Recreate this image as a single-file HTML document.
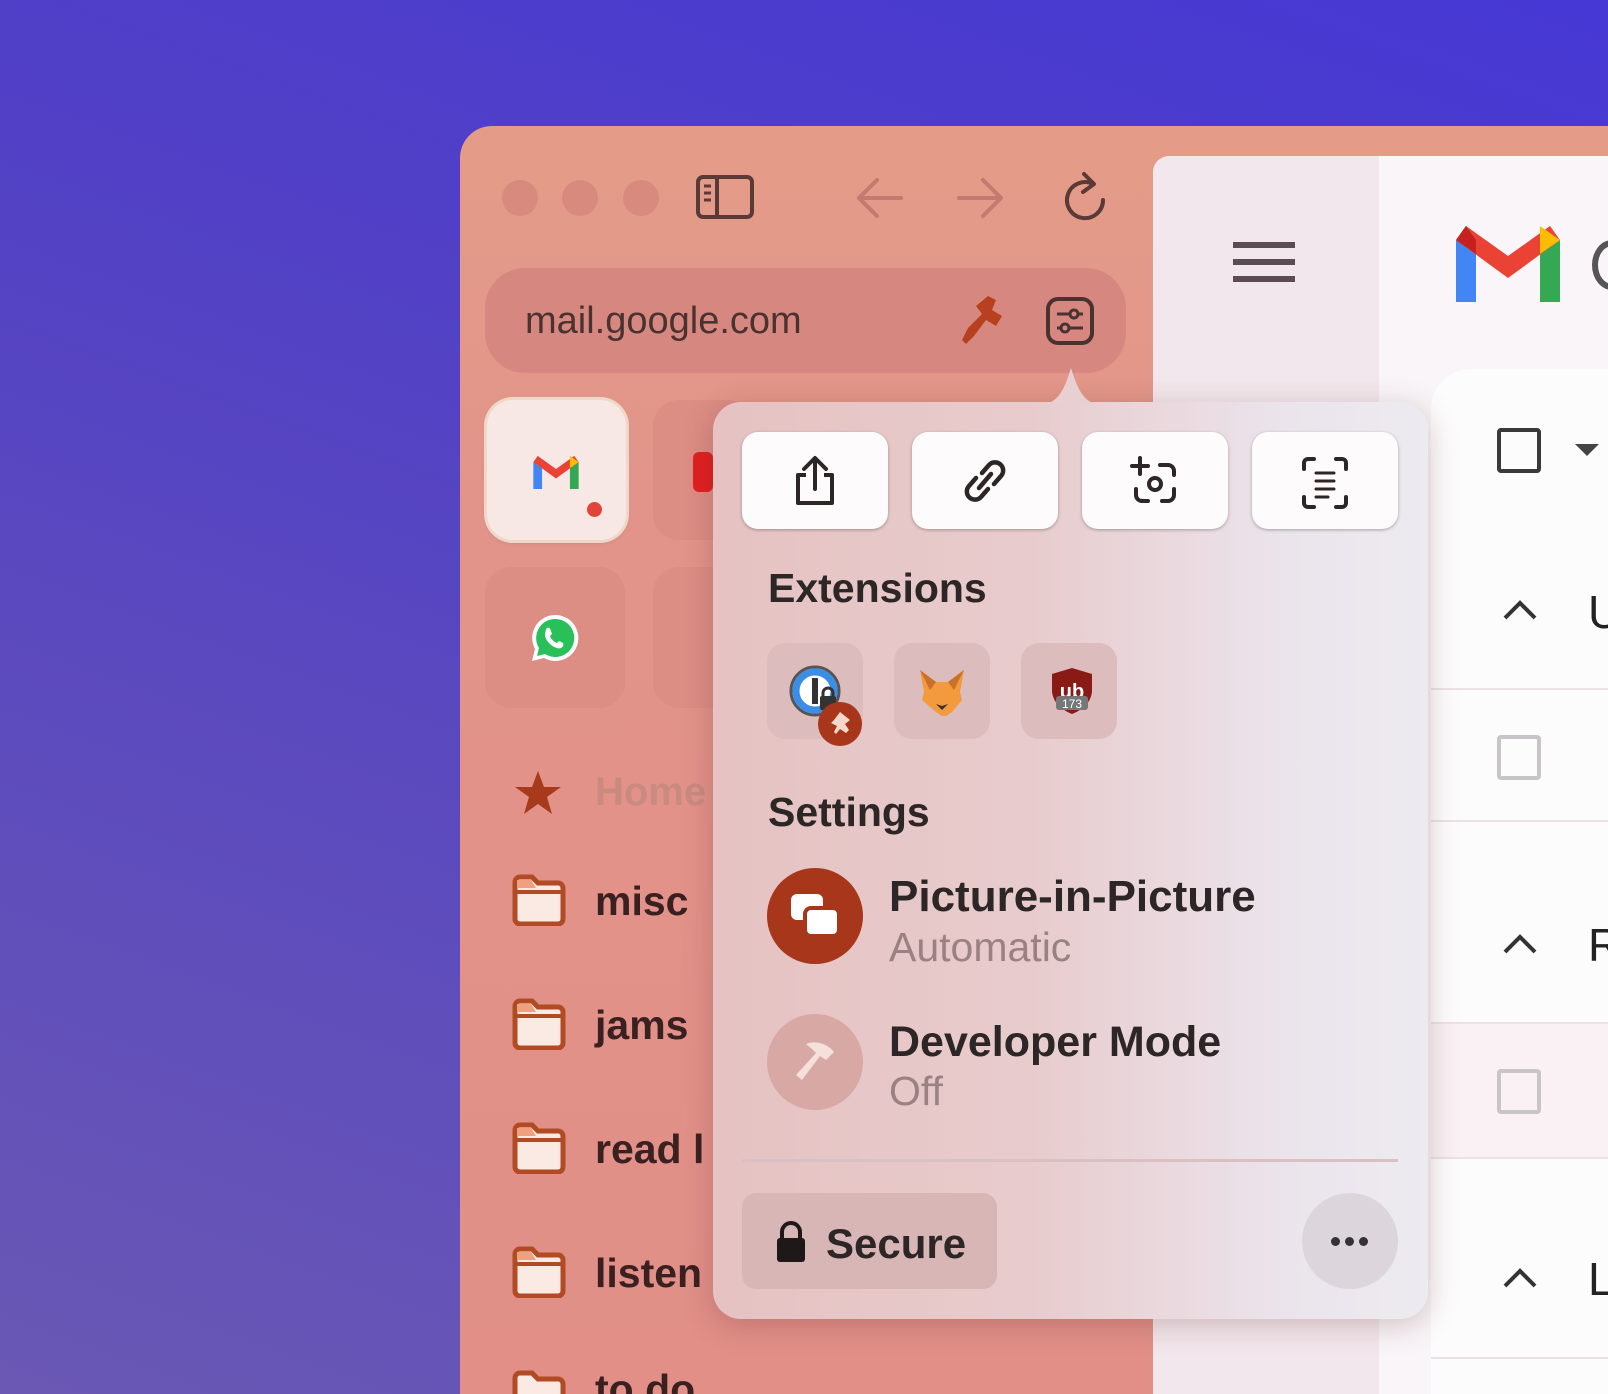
<!DOCTYPE html>
<html style="width:1608px;height:1394px;overflow:hidden;background:#5040c8"><head><meta charset="utf-8"><style>
*{margin:0;padding:0;box-sizing:border-box}
body{width:1608px;height:1394px;overflow:hidden;position:relative;font-family:"Liberation Sans",sans-serif;
background:linear-gradient(200deg,#4638d4 0%,#5342c4 40%,#6a58b4 100%)}
.a{position:absolute}
.win{left:460px;top:126px;width:1148px;height:1268px;border-top-left-radius:32px;background:linear-gradient(180deg,#e49c88 0%,#e2948a 30%,#e18f87 100%)}
.tl{width:36px;height:36px;border-radius:50%;background:#d98a7e;top:180px}
.gm{left:1153px;top:156px;width:455px;height:1238px;background:#f2e7ec;border-top-left-radius:16px}
.gm2{left:1379px;top:156px;width:229px;height:1238px;background:#f9f5f8}
.card{left:1431px;top:369px;width:177px;height:1025px;background:#fdfcfd;border-top-left-radius:40px}
.pop{left:713px;top:402px;width:715px;height:917px;border-radius:28px;background:linear-gradient(90deg,#e6c2c2 0%,#e8cccd 45%,#ebe4ec 80%,#ecebf0 100%);box-shadow:0 6px 30px rgba(90,40,40,.25)}
.btn{top:432px;width:146px;height:97px;background:#fdfbfb;border-radius:16px;box-shadow:0 1px 3px rgba(0,0,0,.3)}
.btn svg{position:absolute;left:48px;top:23px}
.h{font-weight:bold;font-size:41px;color:#2d2626}
.ext{top:643px;width:96px;height:96px;border-radius:18px;background:#dcbcbc}
.t{font-weight:bold;color:#2d2626}
.s{font-size:41px;color:#9a8282}
.fold{font-size:41px;font-weight:bold;color:#3a2020;left:595px}
.chk{width:44px;height:45px;border:4px solid #c8c4c8;border-radius:4px}
.sep{height:2px;background:#ece2e6;left:1431px;width:177px}
</style></head><body>
<div class="a win"></div>
<div class="a tl" style="left:502px"></div>
<div class="a tl" style="left:562px"></div>
<div class="a tl" style="left:623px"></div>
<svg class="a" style="left:695px;top:174px" width="60" height="46" viewBox="0 0 60 46"><rect x="3" y="3" width="54" height="40" rx="5" fill="none" stroke="#5a3a36" stroke-width="4"/><line x1="22" y1="3" x2="22" y2="43" stroke="#5a3a36" stroke-width="4"/><path d="M9 12h7M9 19h7M9 26h7" stroke="#5a3a36" stroke-width="3"/></svg>
<svg class="a" style="left:853px;top:176px" width="52" height="44"><path d="M48 22H6M24 4L6 22l18 18" fill="none" stroke="#c47a70" stroke-width="4" stroke-linecap="round" stroke-linejoin="round"/></svg>
<svg class="a" style="left:955px;top:176px" width="52" height="44"><path d="M4 22h42M28 4l18 18-18 18" fill="none" stroke="#c47a70" stroke-width="4" stroke-linecap="round" stroke-linejoin="round"/></svg>
<svg class="a" style="left:1060px;top:168px" width="50" height="58"><path d="M33 16A18 18 0 1 0 43 32" fill="none" stroke="#5a3a36" stroke-width="4" stroke-linecap="round"/><path d="M24 6l10 10-11 8" fill="none" stroke="#5a3a36" stroke-width="4" stroke-linecap="round" stroke-linejoin="round"/></svg>
<div class="a" style="left:485px;top:268px;width:641px;height:105px;border-radius:40px;background:#d68880"></div>
<div class="a" style="left:525px;top:300px;font-size:38px;color:#4a3230">mail.google.com</div>
<svg class="a" style="left:958px;top:292px" width="50" height="56" viewBox="0 0 50 56"><path d="M30 4l8 4-4 10 10 6-6 10-10-6-12 16-8 8-4-4 6-12 14-14-6-8z" fill="#b7401e"/></svg>
<svg class="a" style="left:1045px;top:296px" width="50" height="50"><rect x="3" y="3" width="44" height="44" rx="10" fill="none" stroke="#4a3230" stroke-width="4"/><path d="M12 18h26M12 32h26" stroke="#4a3230" stroke-width="3"/><circle cx="29" cy="18" r="4" fill="#d68880" stroke="#4a3230" stroke-width="3"/><circle cx="20" cy="32" r="4" fill="#d68880" stroke="#4a3230" stroke-width="3"/></svg>
<div class="a gm"></div><div class="a gm2"></div>
<div class="a" style="left:1233px;top:242px;width:62px;height:6px;background:#5a4c50;box-shadow:0 17px 0 #5a4c50,0 34px 0 #5a4c50"></div>
<svg class="a" style="left:1456px;top:224px" width="104" height="78" viewBox="0 0 104 78"><path d="M0 16v62h20V30z" fill="#4285f4"/><path d="M84 30v48h20V16z" fill="#34a853"/><path d="M0 16l52 38 52-38-10-14-42 30L10 2z" fill="#ea4335"/><path d="M84 2l20 14v0L84 30z" fill="#fbbc04"/><path d="M0 16L10 2l10 14v14z" fill="#c5221f"/></svg>
<div class="a" style="left:1592px;top:240px;width:40px;height:50px;border:6px solid #555;border-radius:50%"></div>
<div class="a card"></div>
<div class="a chk" style="left:1497px;top:428px;border-color:#3a3a3a"></div>
<svg class="a" style="left:1575px;top:444px" width="24" height="14"><path d="M0 0h24L12 12z" fill="#444"/></svg>
<svg class="a" style="left:1502px;top:598px" width="36" height="24"><path d="M3 20L18 5l15 15" fill="none" stroke="#333" stroke-width="4"/></svg>
<svg class="a" style="left:1502px;top:932px" width="36" height="24"><path d="M3 20L18 5l15 15" fill="none" stroke="#333" stroke-width="4"/></svg>
<svg class="a" style="left:1502px;top:1266px" width="36" height="24"><path d="M3 20L18 5l15 15" fill="none" stroke="#333" stroke-width="4"/></svg>
<div class="a" style="left:1588px;top:585px;font-size:46px;color:#222">U</div>
<div class="a" style="left:1588px;top:918px;font-size:46px;color:#222">R</div>
<div class="a" style="left:1588px;top:1252px;font-size:46px;color:#222">L</div>
<div class="a sep" style="top:688px"></div><div class="a sep" style="top:820px"></div>
<div class="a" style="left:1431px;top:1022px;width:177px;height:135px;background:#f9f1f4"></div>
<div class="a sep" style="top:1022px"></div><div class="a sep" style="top:1157px"></div><div class="a sep" style="top:1357px"></div>
<div class="a chk" style="left:1497px;top:735px"></div>
<div class="a chk" style="left:1497px;top:1069px"></div>
<!-- sidebar -->
<div class="a" style="left:487px;top:400px;width:139px;height:140px;border-radius:26px;background:#f7e8e6;box-shadow:0 0 0 3px #f0d8c8,0 2px 6px rgba(0,0,0,.15)"></div>
<svg class="a" style="left:533px;top:455px" width="46" height="34" viewBox="0 0 104 78"><path d="M0 16v62h20V30z" fill="#4285f4"/><path d="M84 30v48h20V16z" fill="#34a853"/><path d="M0 16l52 38 52-38-10-14-42 30L10 2z" fill="#ea4335"/><path d="M84 2l20 14L84 30z" fill="#fbbc04"/></svg>
<div class="a" style="left:587px;top:502px;width:15px;height:15px;border-radius:50%;background:#e0453a"></div>
<div class="a" style="left:653px;top:400px;width:100px;height:140px;border-radius:26px;background:#dc8d84"></div>
<div class="a" style="left:693px;top:452px;width:20px;height:40px;border-radius:6px;background:#e02020"></div>
<div class="a" style="left:485px;top:567px;width:140px;height:141px;border-radius:26px;background:#dc8d84"></div>
<div class="a" style="left:653px;top:567px;width:100px;height:141px;border-radius:26px;background:#dc8d84"></div>
<svg class="a" style="left:529px;top:612px" width="52" height="52" viewBox="0 0 52 52"><path d="M26 3a23 23 0 0 0-20 34L3 49l12-3A23 23 0 1 0 26 3z" fill="#fff"/><path d="M26 7a19 19 0 0 0-16 29l-2 8 8-2A19 19 0 1 0 26 7z" fill="#29c05a"/><path d="M18 16c2-1 3 0 4 3l1 3-2 2c1 3 4 6 7 7l2-2 4 2c1 2 0 4-2 5-4 2-14-4-16-12 0-4 1-7 2-8z" fill="#fff"/></svg>
<svg class="a" style="left:514px;top:770px" width="48" height="46" viewBox="0 0 48 46"><path d="M24 1l6 16h17l-14 10 5 17-14-10-14 10 5-17L1 17h17z" fill="#a83a1c"/></svg>
<div class="a" style="left:595px;top:770px;font-size:40px;font-weight:bold;color:#c98a80">Home</div>
<div class="a fold" style="top:878px">misc</div>
<div class="a fold" style="top:1002px">jams</div>
<div class="a fold" style="top:1126px">read l</div>
<div class="a fold" style="top:1250px">listen</div>
<div class="a fold" style="top:1366px">to do</div>
<svg class="a" style="left:512px;top:874px" width="54" height="52"><path d="M3 8a5 5 0 0 1 5-5h12l6 6h20a5 5 0 0 1 5 5v31a5 5 0 0 1-5 5H8a5 5 0 0 1-5-5z" fill="#fbe9e4" stroke="#b24a24" stroke-width="5"/><path d="M3 18h48" stroke="#b24a24" stroke-width="4"/><path d="M5 6h14l5 8H5z" fill="#f0a07e"/></svg>
<svg class="a" style="left:512px;top:998px" width="54" height="52"><path d="M3 8a5 5 0 0 1 5-5h12l6 6h20a5 5 0 0 1 5 5v31a5 5 0 0 1-5 5H8a5 5 0 0 1-5-5z" fill="#fbe9e4" stroke="#b24a24" stroke-width="5"/><path d="M3 18h48" stroke="#b24a24" stroke-width="4"/><path d="M5 6h14l5 8H5z" fill="#f0a07e"/></svg>
<svg class="a" style="left:512px;top:1122px" width="54" height="52"><path d="M3 8a5 5 0 0 1 5-5h12l6 6h20a5 5 0 0 1 5 5v31a5 5 0 0 1-5 5H8a5 5 0 0 1-5-5z" fill="#fbe9e4" stroke="#b24a24" stroke-width="5"/><path d="M3 18h48" stroke="#b24a24" stroke-width="4"/><path d="M5 6h14l5 8H5z" fill="#f0a07e"/></svg>
<svg class="a" style="left:512px;top:1246px" width="54" height="52"><path d="M3 8a5 5 0 0 1 5-5h12l6 6h20a5 5 0 0 1 5 5v31a5 5 0 0 1-5 5H8a5 5 0 0 1-5-5z" fill="#fbe9e4" stroke="#b24a24" stroke-width="5"/><path d="M3 18h48" stroke="#b24a24" stroke-width="4"/><path d="M5 6h14l5 8H5z" fill="#f0a07e"/></svg>
<svg class="a" style="left:512px;top:1370px" width="54" height="24"><path d="M3 8a5 5 0 0 1 5-5h12l6 6h20a5 5 0 0 1 5 5v31H3z" fill="#fbe9e4" stroke="#b24a24" stroke-width="5"/></svg>
<!-- popup -->
<div class="a pop"></div>
<svg class="a" style="left:1040px;top:366px" width="62" height="38"><path d="M0 38C14 38 22 32 31 2 40 32 48 38 62 38z" fill="#e8d0d2"/></svg>
<div class="a btn" style="left:742px"><svg width="50" height="52"><path d="M25 34V4M14 14L25 3l11 11" fill="none" stroke="#2e2626" stroke-width="4" stroke-linecap="round" stroke-linejoin="round"/><path d="M16 20H8v28h34V20h-8" fill="none" stroke="#2e2626" stroke-width="4" stroke-linejoin="round"/></svg></div>
<div class="a btn" style="left:912px"><svg width="50" height="52"><g fill="none" stroke="#2e2626" stroke-width="4.5" stroke-linecap="round"><path d="M22 18l7-8a8 8 0 0 1 12 11l-7 8"/><path d="M28 34l-7 8a8 8 0 0 1-12-11l7-8"/><path d="M19 33l12-14"/></g></svg></div>
<div class="a btn" style="left:1082px"><svg width="50" height="52"><g fill="none" stroke="#2e2626" stroke-width="4" stroke-linecap="round"><path d="M10 3v16M2 11h16"/><path d="M30 10h8a6 6 0 0 1 6 6v4M44 34v6a6 6 0 0 1-6 6h-6M18 46h-6a6 6 0 0 1-6-6v-6"/><circle cx="25" cy="29" r="6"/></g></svg></div>
<div class="a btn" style="left:1252px"><svg width="50" height="56"><g fill="none" stroke="#2e2626" stroke-width="4" stroke-linecap="round"><path d="M14 4H8a4 4 0 0 0-4 4v6M36 4h6a4 4 0 0 1 4 4v6M14 52H8a4 4 0 0 1-4-4v-6M36 52h6a4 4 0 0 0 4-4v-6"/><path d="M16 18h18M16 26h18M16 34h18M16 42h12" stroke-width="3"/></g></svg></div>
<div class="a h" style="left:768px;top:565px">Extensions</div>
<div class="a ext" style="left:767px"></div>
<div class="a ext" style="left:894px"></div>
<div class="a ext" style="left:1021px"></div>
<svg class="a" style="left:788px;top:664px" width="80" height="86"><circle cx="27" cy="27" r="24" fill="#fff" stroke="#555" stroke-width="3"/><circle cx="27" cy="27" r="19" fill="none" stroke="#3a8ee6" stroke-width="7"/><rect x="24" y="14" width="6" height="26" fill="#333"/><rect x="32" y="32" width="16" height="14" rx="2" fill="#333"/><path d="M35 33v-4a5 5 0 0 1 10 0v4" fill="none" stroke="#333" stroke-width="3"/><circle cx="52" cy="60" r="22" fill="#a8361a"/><path d="M52 48l10 8-5 4 4 6-3 3-6-4-4 5-2-2 3-6-6-3 3-3z" fill="#f5d8cc"/></svg>
<svg class="a" style="left:916px;top:666px" width="52" height="52" viewBox="0 0 52 52"><path d="M4 4l16 12h12L48 4l-4 22 2 8-10 12-6 4h-4l-6-4L6 34l2-8z" fill="#f29a3c"/><path d="M4 4l16 12-6 8z M48 4L32 16l6 8z" fill="#c9702a"/><path d="M20 38l6 6 6-6-6 2z" fill="#333"/></svg>
<svg class="a" style="left:1046px;top:666px" width="50" height="50"><path d="M6 8l20-6 20 6v16c0 12-10 20-20 24C16 44 6 36 6 24z" fill="#8a1a16"/><text x="26" y="32" font-family="Liberation Sans" font-weight="bold" font-size="20" fill="#fff" text-anchor="middle">ub</text><rect x="10" y="30" width="32" height="14" rx="3" fill="#777"/><text x="26" y="42" font-family="Liberation Sans" font-size="12" fill="#fff" text-anchor="middle">173</text></svg>
<div class="a h" style="left:768px;top:789px">Settings</div>
<div class="a" style="left:767px;top:868px;width:96px;height:96px;border-radius:50%;background:#a8361a"></div>
<svg class="a" style="left:789px;top:892px" width="54" height="48"><rect x="2" y="2" width="32" height="26" rx="6" fill="#fff"/><rect x="16" y="16" width="34" height="28" rx="6" fill="#fff" stroke="#a8361a" stroke-width="4"/></svg>
<div class="a t" style="left:889px;top:872px;font-size:44px">Picture-in-Picture</div>
<div class="a s" style="left:889px;top:924px">Automatic</div>
<div class="a" style="left:767px;top:1014px;width:96px;height:96px;border-radius:50%;background:#d8a8a4"></div>
<svg class="a" style="left:790px;top:1038px" width="50" height="50"><path d="M16 6c10-4 22 0 28 8l-8 8-6-4-18 24-6-5 20-22-4-4z" fill="#f5e0dc"/></svg>
<div class="a t" style="left:889px;top:1018px;font-size:43px">Developer Mode</div>
<div class="a s" style="left:889px;top:1068px">Off</div>
<div class="a" style="left:742px;top:1159px;width:656px;height:3px;background:#d9c0c2"></div>
<div class="a" style="left:742px;top:1193px;width:255px;height:96px;border-radius:14px;background:#d9b6b6"></div>
<svg class="a" style="left:775px;top:1220px" width="32" height="44"><path d="M7 18v-6a9 9 0 0 1 18 0v6" fill="none" stroke="#1e1818" stroke-width="4"/><rect x="2" y="18" width="28" height="24" rx="3" fill="#1e1818"/></svg>
<div class="a" style="left:826px;top:1220px;font-size:42px;color:#2d2626;font-weight:bold">Secure</div>
<div class="a" style="left:1302px;top:1193px;width:96px;height:96px;border-radius:50%;background:#dcd6dc"></div>
<div class="a" style="left:1331px;top:1237px;width:9px;height:9px;border-radius:50%;background:#333;box-shadow:14px 0 0 #333,28px 0 0 #333"></div>
</body></html>
